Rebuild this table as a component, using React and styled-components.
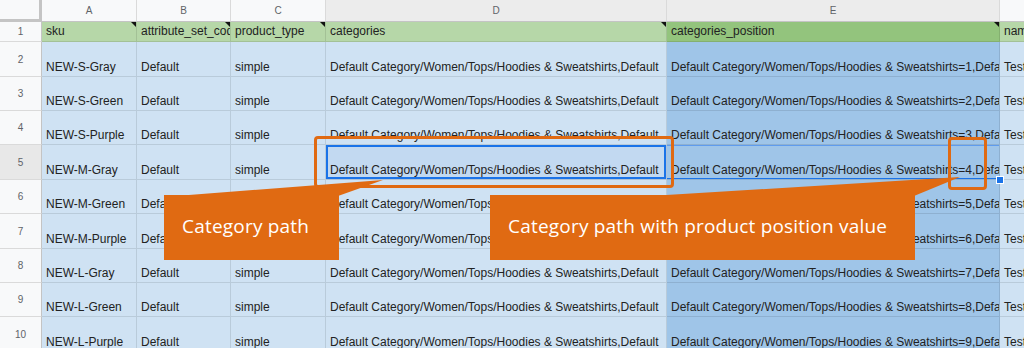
import React from 'react';
import styled, { createGlobalStyle } from 'styled-components';

const ORANGE = '#e06a12';
const GREEN = '#b6d7a8';
const GREEN_DARK = '#93c47d';
const BLUE = '#cfe2f3';
const BLUE_DARK = '#9fc5e8';

const GlobalStyle = createGlobalStyle`
  html, body {
    margin: 0;
    padding: 0;
    background: #ffffff;
  }
  body {
    width: 1024px;
    height: 348px;
    overflow: hidden;
    font-family: 'Liberation Sans', Arial, sans-serif;
  }
`;

const Sheet = styled.div`
  position: relative;
  width: 1024px;
  height: 348px;
  overflow: hidden;
`;

const Grid = styled.div`
  display: grid;
  grid-template-columns: 42px 95px 94px 95px 341px 333px 80px;
  grid-template-rows: ${(props) => props.rows};
`;

const Corner = styled.div`
  box-sizing: border-box;
  background: #f8f9fa;
  border-right: 3px solid #c4c4c4;
  border-bottom: 3px solid #c4c4c4;
`;

const ColHead = styled.div`
  box-sizing: border-box;
  display: flex;
  align-items: center;
  justify-content: center;
  background: ${(props) => (props.active ? '#ececec' : '#f8f9fa')};
  border-right: 1px solid #dadada;
  border-bottom: 1px solid #c4c4c4;
  font-size: 10px;
  color: #5f6368;
`;

const RowHead = styled.div`
  box-sizing: border-box;
  display: flex;
  align-items: center;
  justify-content: center;
  background: ${(props) => (props.active ? '#e8e8e8' : '#f8f9fa')};
  border-right: 1px solid #c4c4c4;
  border-bottom: 1px solid #dadada;
  font-size: 10px;
  color: #5f6368;
`;

const Cell = styled.div`
  position: relative;
  box-sizing: border-box;
  display: flex;
  align-items: flex-end;
  padding: 0 4px ${(props) => (props.header ? 3 : 2)}px 4px;
  background: ${(props) => props.bg};
  border-right: 1px solid rgba(0, 0, 0, 0.1);
  border-bottom: 1px solid rgba(0, 0, 0, 0.1);
  box-shadow: ${(props) =>
    props.active
      ? 'inset 0 0 0 2px #1a73e8'
      : props.range
      ? 'inset 0 1px 0 #5f9cee, inset 0 -1px 0 #1a73e8'
      : 'none'};
  font-size: 12px;
  line-height: 14px;
  color: #222222;
  white-space: nowrap;
  overflow: hidden;

  &::after {
    content: '';
    display: ${(props) => (props.note ? 'block' : 'none')};
    position: absolute;
    top: 0;
    right: 0;
    border-left: 5px solid transparent;
    border-top: 5px solid #111111;
  }
`;

const Handle = styled.div`
  position: absolute;
  left: 996px;
  top: 176px;
  width: 6px;
  height: 6px;
  background: #1a73e8;
  border: 1px solid #ffffff;
`;

const Outline = styled.div`
  position: absolute;
  box-sizing: border-box;
  left: ${(props) => props.x}px;
  top: ${(props) => props.y}px;
  width: ${(props) => props.w}px;
  height: ${(props) => props.h}px;
  border: 3px solid ${ORANGE};
  border-radius: 4px;
`;

const Pointers = styled.svg`
  position: absolute;
  left: 0;
  top: 0;
  width: 1024px;
  height: 348px;
  pointer-events: none;
`;

const Callout = styled.div`
  position: absolute;
  box-sizing: border-box;
  left: ${(props) => props.x}px;
  top: ${(props) => props.y}px;
  width: ${(props) => props.w}px;
  height: ${(props) => props.h}px;
  display: flex;
  align-items: center;
  padding: 0 0 4px ${(props) => props.pad}px;
  background: ${ORANGE};
  color: #ffffff;
  font-family: 'Open Sans', 'Noto Sans', sans-serif;
  font-size: 19px;
  font-weight: 500;
  letter-spacing: 0.2px;
`;

const columns = [
  { letter: 'A', title: 'sku', head: GREEN, body: BLUE, note: true },
  { letter: 'B', title: 'attribute_set_code', head: GREEN, body: BLUE, note: true },
  { letter: 'C', title: 'product_type', head: GREEN, body: BLUE, note: true },
  { letter: 'D', title: 'categories', head: GREEN, body: BLUE, note: true, active: true },
  { letter: 'E', title: 'categories_position', head: GREEN_DARK, body: BLUE_DARK, note: true, active: true },
  { letter: '', title: 'name', head: GREEN, body: BLUE },
];

const path = 'Default Category/Women/Tops/Hoodies & Sweatshirts';

const rows = [
  { sku: 'NEW-S-Gray', h: 35 },
  { sku: 'NEW-S-Green', h: 34 },
  { sku: 'NEW-S-Purple', h: 34 },
  { sku: 'NEW-M-Gray', h: 35, active: true },
  { sku: 'NEW-M-Green', h: 34 },
  { sku: 'NEW-M-Purple', h: 35 },
  { sku: 'NEW-L-Gray', h: 34 },
  { sku: 'NEW-L-Green', h: 34 },
  { sku: 'NEW-L-Purple', h: 35 },
];

const rowTemplate = `22px 20px ${rows.map((r) => `${r.h}px`).join(' ')}`;

export default function App() {
  return (
    <Sheet>
      <GlobalStyle />
      <Grid rows={rowTemplate}>
        <Corner />
        {columns.map((col, i) => (
          <ColHead key={`h${i}`} active={col.active}>
            {col.letter}
          </ColHead>
        ))}

        <RowHead>1</RowHead>
        {columns.map((col, i) => (
          <Cell key={`t${i}`} header bg={col.head} note={col.note}>
            {col.title}
          </Cell>
        ))}

        {rows.map((row, i) => {
          const n = i + 1;
          const values = [
            row.sku,
            'Default',
            'simple',
            `${path},Default`,
            `${path}=${n},Default Category/Collections`,
            'Test',
          ];
          return (
            <React.Fragment key={row.sku}>
              <RowHead active={row.active}>{i + 2}</RowHead>
              {values.map((v, j) => (
                <Cell
                  key={j}
                  bg={row.active && j === 3 ? '#c2d9f1' : columns[j].body}
                  active={row.active && j === 3}
                  range={row.active && j === 4}
                >
                  {v}
                </Cell>
              ))}
            </React.Fragment>
          );
        })}
      </Grid>

      <Handle />

      <Outline x={314} y={136} w={360} h={52} />
      <Outline x={948} y={137} w={39} h={53} />

      <Pointers viewBox='0 0 1024 348'>
        <polygon points='176,196 383,180 338,196' fill={ORANGE} />
        <polygon points='650,196 960,177 914,196' fill={ORANGE} />
      </Pointers>

      <Callout x={164} y={195} w={175} h={65} pad={18}>
        Category path
      </Callout>
      <Callout x={490} y={195} w={425} h={65} pad={18}>
        Category path with product position value
      </Callout>
    </Sheet>
  );
}
